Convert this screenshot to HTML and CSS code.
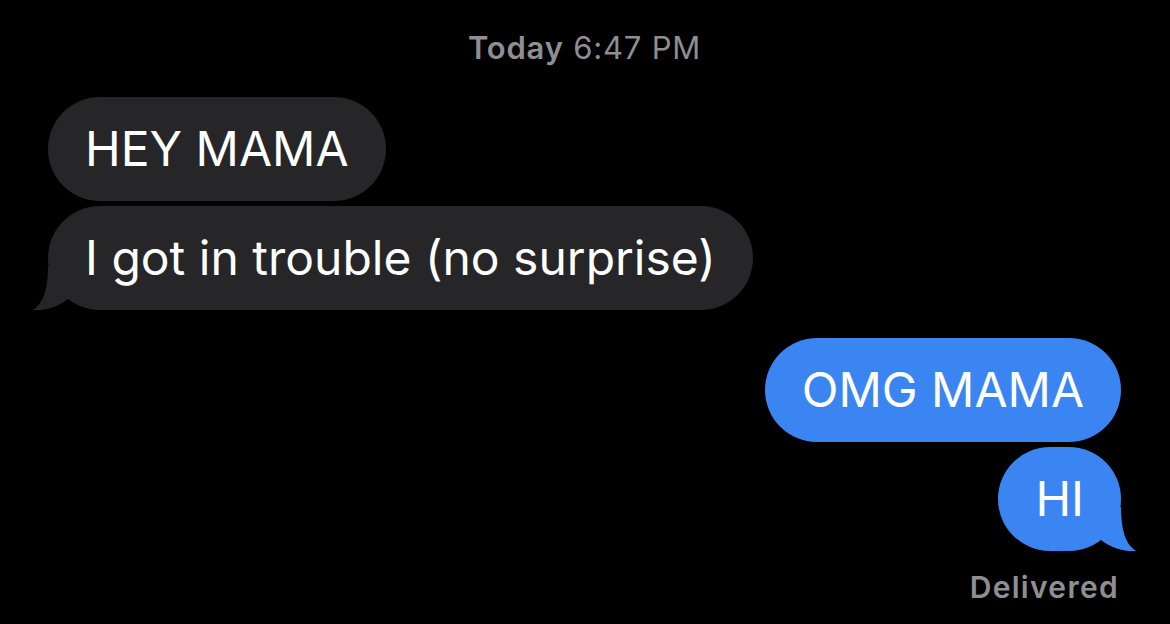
FILE: index.html
```html
<!DOCTYPE html>
<html lang="en">
<head>
    <meta charset="UTF-8">
    <meta name="viewport" content="width=device-width, initial-scale=1.0">
    <title>Messages</title>
    <link rel="stylesheet" href="styles.css">
</head>
<body>
    <main class="thread">
        <p class="stamp"><b>Today</b> 6:47 PM</p>

        <div class="group incoming">
            <div class="bubble"><span class="text">HEY MAMA</span></div>
            <div class="bubble has-tail">
                <svg class="tail" viewBox="0 0 60 44" aria-hidden="true">
                    <path d="M16 0 C16 22 12 37 1 44 C13 45 26 41 36 33 L60 20 L60 0 Z"/>
                </svg>
                <span class="text">I got in trouble (no surprise)</span>
            </div>
        </div>

        <div class="group outgoing">
            <div class="bubble"><span class="text">OMG MAMA</span></div>
            <div class="bubble has-tail">
                <svg class="tail" viewBox="0 0 60 44" aria-hidden="true">
                    <path d="M16 0 C16 22 12 37 1 44 C13 45 26 41 36 33 L60 20 L60 0 Z"/>
                </svg>
                <span class="text">HI</span>
            </div>
        </div>

        <p class="status">Delivered</p>
    </main>
</body>
</html>
```

FILE: styles.css
```css
body {
    margin: 0;
    background-color: #000;
    color: #fff;
    font-family: Inter, "Noto Sans", sans-serif;
}
.thread {
    display: flex;
    flex-direction: column;
    padding: 0 49px 0 48px;
}
.stamp {
    margin: 28px 0 0;
    text-align: center;
    font-size: 31px;
    letter-spacing: 0.8px;
    line-height: 40px;
    color: #8e8e93;
}
.stamp b {
    font-weight: 600;
}
.group {
    display: flex;
    flex-direction: column;
    gap: 5px;
}
.group.incoming {
    align-items: flex-start;
    margin-top: 29px;
}
.group.outgoing {
    align-items: flex-end;
    margin-top: 28px;
}
.bubble {
    position: relative;
    padding: 22px 37px;
    font-size: 48px;
    line-height: 60px;
    border-radius: 52px;
    white-space: nowrap;
}
.bubble .text {
    position: relative;
}
.incoming .bubble {
    background-color: #262628;
}
.outgoing .bubble {
    background-color: #3b85f3;
}
.tail {
    position: absolute;
    bottom: 0;
    width: 60px;
    height: 44px;
}
.incoming .tail {
    left: -16px;
    fill: #262628;
}
.outgoing .tail {
    right: -16px;
    fill: #3b85f3;
    transform: scaleX(-1);
}
.status {
    margin: 18px 2px 0 0;
    text-align: right;
    font-size: 30px;
    font-weight: 600;
    letter-spacing: 1.3px;
    line-height: 36px;
    color: #8e8e93;
}
```
